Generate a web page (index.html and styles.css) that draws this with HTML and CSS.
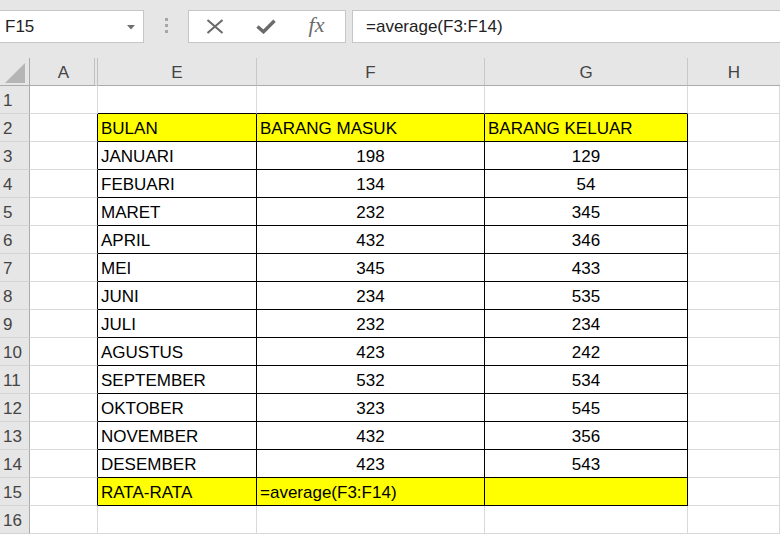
FILE: index.html
```html
<!DOCTYPE html>
<html>
<head>
<meta charset="utf-8">
<link rel="stylesheet" href="styles.css">
</head>
<body>
<div class="app">
  <div class="toolbar">
    <div class="namebox"><span>F15</span><svg class="caret" width="8" height="5" viewBox="0 0 8 5"><path d="M0 0H8L4 4.5Z" fill="#707070"/></svg></div>
    <div class="grip"><i></i><i></i><i></i></div>
    <div class="fbuttons">
      <span class="btn"><svg width="18" height="15" viewBox="0 0 18 15"><path d="M1.5 1L16.5 14M16.5 1L1.5 14" stroke="#6b6b6b" stroke-width="2.1" fill="none"/></svg></span>
      <span class="btn"><svg width="20" height="15" viewBox="0 0 20 15"><path d="M1.5 7.5L7.5 12.8L18.5 1.8" stroke="#6b6b6b" stroke-width="3.4" fill="none"/></svg></span>
      <span class="btn fx">fx</span>
    </div>
    <div class="formula">=average(F3:F14)</div>
  </div>
  <div class="sheet">
    <div class="h corner"><svg width="29" height="27" viewBox="0 0 29 27"><path d="M5 25H25V5Z" fill="#b5b5b5"/></svg></div>
    <div class="h colA">A</div>
    <div class="h">E</div>
    <div class="h">F</div>
    <div class="h">G</div>
    <div class="h last">H</div>

    <div class="r">1</div><div class="c"></div><div class="c tb"></div><div class="c tb"></div><div class="c tb"></div><div class="c"></div>

    <div class="r">2</div><div class="c la"></div><div class="c bk yl">BULAN</div><div class="c bk yl">BARANG MASUK</div><div class="c bk yl">BARANG KELUAR</div><div class="c"></div>
    <div class="r">3</div><div class="c la"></div><div class="c bk">JANUARI</div><div class="c bk ctr">198</div><div class="c bk ctr">129</div><div class="c"></div>
    <div class="r">4</div><div class="c la"></div><div class="c bk">FEBUARI</div><div class="c bk ctr">134</div><div class="c bk ctr">54</div><div class="c"></div>
    <div class="r">5</div><div class="c la"></div><div class="c bk">MARET</div><div class="c bk ctr">232</div><div class="c bk ctr">345</div><div class="c"></div>
    <div class="r">6</div><div class="c la"></div><div class="c bk">APRIL</div><div class="c bk ctr">432</div><div class="c bk ctr">346</div><div class="c"></div>
    <div class="r">7</div><div class="c la"></div><div class="c bk">MEI</div><div class="c bk ctr">345</div><div class="c bk ctr">433</div><div class="c"></div>
    <div class="r">8</div><div class="c la"></div><div class="c bk">JUNI</div><div class="c bk ctr">234</div><div class="c bk ctr">535</div><div class="c"></div>
    <div class="r">9</div><div class="c la"></div><div class="c bk">JULI</div><div class="c bk ctr">232</div><div class="c bk ctr">234</div><div class="c"></div>
    <div class="r">10</div><div class="c la"></div><div class="c bk">AGUSTUS</div><div class="c bk ctr">423</div><div class="c bk ctr">242</div><div class="c"></div>
    <div class="r">11</div><div class="c la"></div><div class="c bk">SEPTEMBER</div><div class="c bk ctr">532</div><div class="c bk ctr">534</div><div class="c"></div>
    <div class="r">12</div><div class="c la"></div><div class="c bk">OKTOBER</div><div class="c bk ctr">323</div><div class="c bk ctr">545</div><div class="c"></div>
    <div class="r">13</div><div class="c la"></div><div class="c bk">NOVEMBER</div><div class="c bk ctr">432</div><div class="c bk ctr">356</div><div class="c"></div>
    <div class="r">14</div><div class="c la"></div><div class="c bk">DESEMBER</div><div class="c bk ctr">423</div><div class="c bk ctr">543</div><div class="c"></div>
    <div class="r">15</div><div class="c la"></div><div class="c bk yl">RATA-RATA</div><div class="c bk yl">=average(F3:F14)</div><div class="c bk yl"></div><div class="c"></div>

    <div class="r">16</div><div class="c"></div><div class="c"></div><div class="c"></div><div class="c"></div><div class="c"></div>
  </div>
</div>
</body>
</html>
```

FILE: styles.css
```css
html, body {
  margin: 0;
  padding: 0;
  background: #e6e6e6;
  overflow: hidden;
}
.app {
  width: 780px;
  height: 534px;
  overflow: hidden;
  font-family: "Liberation Sans", Arial, sans-serif;
  font-size: 17px;
  color: #000;
}
.toolbar {
  height: 58px;
  box-sizing: border-box;
  padding-top: 10px;
  display: flex;
  align-items: flex-start;
  background: #e6e6e6;
}
.namebox {
  width: 145px;
  margin-left: -1px;
  height: 33px;
  box-sizing: border-box;
  border: 1px solid #c6c6c6;
  background: #fff;
  display: flex;
  align-items: center;
  justify-content: space-between;
  padding: 0 8px 0 5px;
  color: #222;
}
.caret {
  margin-top: 1px;
}
.grip {
  width: 44px;
  height: 33px;
  display: flex;
  flex-direction: column;
  align-items: center;
  padding-top: 8px;
  box-sizing: border-box;
  gap: 3px;
}
.grip i {
  display: block;
  width: 3px;
  height: 3px;
  background: #a6a6a6;
}
.fbuttons {
  width: 158px;
  height: 33px;
  box-sizing: border-box;
  border: 1px solid #c6c6c6;
  background: #fff;
  display: flex;
  align-items: center;
}
.btn {
  width: 51px;
  display: flex;
  align-items: center;
  justify-content: center;
  height: 31px;
}
.fx {
  font-family: "Liberation Serif", "Times New Roman", serif;
  font-style: italic;
  font-size: 22px;
  color: #6b6b6b;
  padding-bottom: 3px;
  box-sizing: border-box;
}
.formula {
  flex: 1;
  margin-left: 6px;
  margin-right: -2px;
  height: 33px;
  box-sizing: border-box;
  border: 1px solid #c6c6c6;
  background: #fff;
  padding-left: 13px;
  padding-top: 1px;
  line-height: 30px;
  color: #222;
}
.sheet {
  display: grid;
  grid-template-columns: 30px 68px 159px 228px 203px 92px;
  grid-auto-rows: 28px;
  background: #fff;
}
.sheet > div {
  box-sizing: border-box;
  line-height: 26px;
  padding-top: 2px;
  white-space: nowrap;
  overflow: hidden;
}
.h {
  background: #e6e6e6;
  border-right: 1px solid #c8c8c8;
  border-bottom: 1px solid #ababab;
  text-align: center;
  color: #444;
}
.h.last {
  border-right: none;
}
.h.corner {
  padding-top: 0 !important;
  border-right: 1px solid #ababab;
}
.h.corner svg {
  display: block;
}
.h.colA {
  border-right: 4px double #c0c0c0;
  padding-left: 3px;
}
.r {
  background: #e6e6e6;
  border-right: 1px solid #ababab;
  border-bottom: 1px solid #d4d4d4;
  color: #444;
  padding-left: 3px;
}
.c {
  border-right: 1px solid #d9d9d9;
  border-bottom: 1px solid #d9d9d9;
  padding-left: 3px;
}
.c.tb {
  border-bottom-color: #000;
}
.c.la {
  border-right-color: #000;
}
.c.bk {
  border-right-color: #000;
  border-bottom-color: #000;
}
.c.yl {
  background: #ffff00;
}
.c.ctr {
  text-align: center;
  padding-left: 0;
}
```
